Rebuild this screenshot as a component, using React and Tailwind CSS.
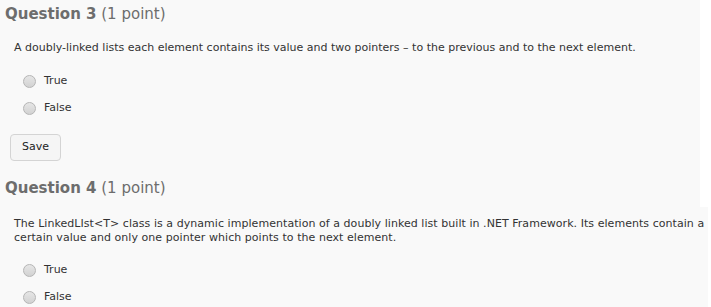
import React from 'react'

function Radio({ label }) {
  return (
    <label className="flex items-center h-[27px] pl-[23px]">
      <span className="w-[13px] h-[13px] rounded-full border border-[#b5b5b5] bg-gradient-to-b from-[#e6e6e6] to-[#d2d2d2]" />
      <span className="ml-[8px] text-[11px] text-[#333]">{label}</span>
    </label>
  )
}

function Heading({ n }) {
  return (
    <h2 className="px-[5px] pt-[4px] h-[28px] text-[15px] text-[#6d6d6d] leading-[20px]">
      <span className="font-bold">Question {n}</span> (1 point)
    </h2>
  )
}

export default function App() {
  return (
    <div className="w-[711px] h-[307px] overflow-hidden bg-white" style={{ fontFamily: '"DejaVu Sans", Verdana, sans-serif' }}>
      <div className="w-[700px] bg-[#f9f9f9]">
        <Heading n={3} />
        <p className="px-[14px] pt-[13px] pb-[13px] text-[11px] leading-[14px] text-[#333]">
          A doubly-linked lists each element contains its value and two pointers – to the previous and to the next element.
        </p>
        <Radio label="True" />
        <Radio label="False" />
        <div className="px-[10px] pt-[11px] pb-[17px]">
          <button className="h-[27px] px-[11px] text-[11px] text-[#222] rounded border border-[#d4d4d4] bg-[#f5f5f5]">
            Save
          </button>
        </div>
        <div className="h-[29px]">
          <h2 className="px-[5px] text-[15px] text-[#6d6d6d] leading-[20px]">
            <span className="font-bold">Question 4</span> (1 point)
          </h2>
        </div>
      </div>
      <div className="w-[708px] bg-[#f9f9f9]">
        <p className="pl-[14px] pt-[10px] pb-[12px] text-[11px] leading-[14px] text-[#333] tracking-[0.05px]">
          The LinkedLIst&lt;T&gt; class is a dynamic implementation of a doubly linked list built in .NET Framework. Its elements contain a certain value and only one pointer which points to the next element.
        </p>
        <Radio label="True" />
        <Radio label="False" />
      </div>
    </div>
  )
}
